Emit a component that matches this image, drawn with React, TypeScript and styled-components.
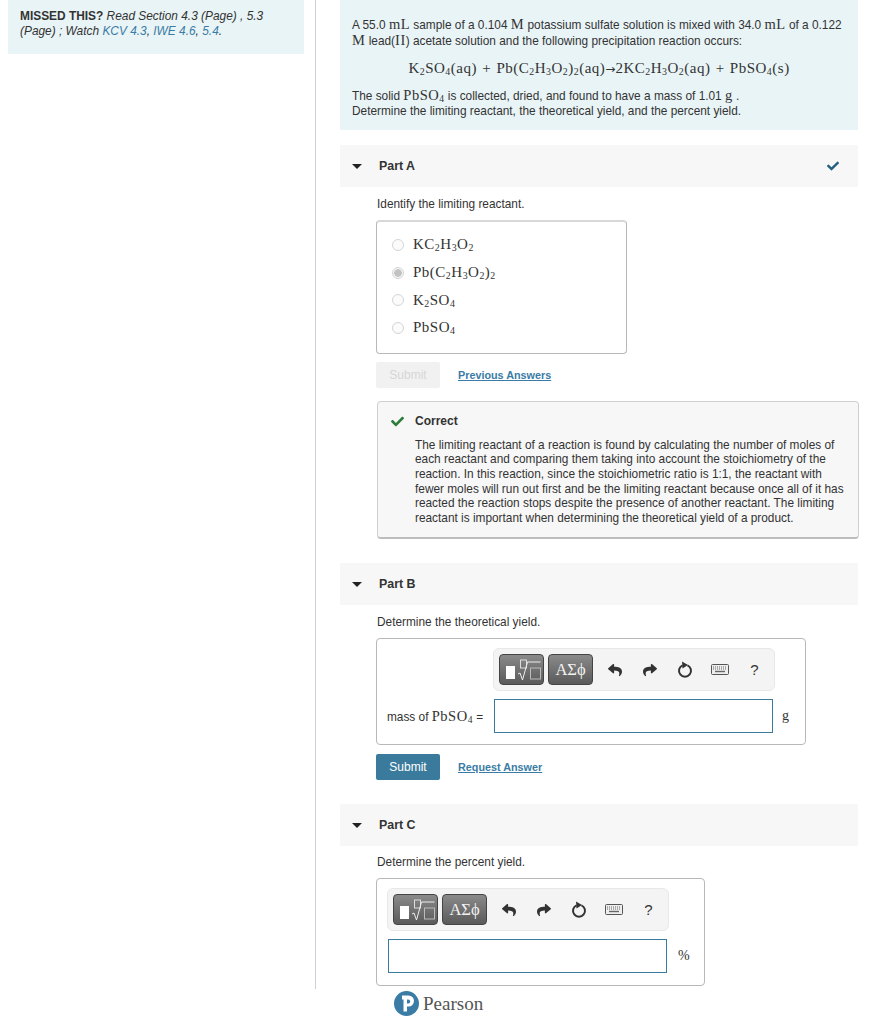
import React from 'react';
import styled, { createGlobalStyle } from 'styled-components';
import { FaCheck, FaReply, FaShare } from 'react-icons/fa';

const GlobalStyle = createGlobalStyle`
  html, body {
    margin: 0;
    padding: 0;
    background: #fff;
  }
  body {
    font-family: 'Liberation Sans', Arial, sans-serif;
    font-size: 12px;
    color: #333;
  }
`;

const Page = styled.div`
  display: flex;
  align-items: flex-start;
  width: 890px;
  height: 1024px;
  overflow: hidden;
  padding-left: 8px;
  box-sizing: border-box;
`;

const Sidebar = styled.aside`
  width: 308px;
  height: 989px;
  flex-shrink: 0;
  box-sizing: border-box;
  border-right: 1px solid #c9d2d9;
`;

const HintPanel = styled.div`
  width: 296px;
  height: 54px;
  box-sizing: border-box;
  padding: 9px 12px 0;
  background: #e9f4f7;
  font-size: 11.9px;
  line-height: 14.5px;
  color: #333;
`;

const HintLink = styled.span`
  color: #3a7ca5;
`;

const Main = styled.main`
  width: 518px;
  margin-left: 24px;
  flex-shrink: 0;
`;

const Intro = styled.section`
  height: 130px;
  box-sizing: border-box;
  padding: 17px 12px 0;
  background: #e9f4f7;
  font-size: 11.85px;
  line-height: 15px;
  color: #333;
`;

const Equation = styled.div`
  display: flex;
  justify-content: center;
  align-items: baseline;
  margin: 10px 0 11px;
  height: 18px;
  line-height: 18px;
  word-spacing: 1px;
`;

const Arrow = styled.span`
  font-family: 'DejaVu Sans', sans-serif;
  font-size: 12px;
  color: #333;
`;

const Math = styled.span`
  font-family: 'Liberation Serif', serif;
  font-size: ${({ $size }: { $size?: number }) => $size || 14.5}px;
  letter-spacing: 0.5px;
  sub {
    font-size: 0.66em;
    line-height: 0;
    vertical-align: -0.25em;
  }
`;

const PartHeader = styled.header`
  display: flex;
  align-items: center;
  height: 42px;
  margin-top: ${({ $top }: { $top: number }) => $top}px;
  padding: 0 19px 0 12px;
  background: #f7f7f7;
`;

const Caret = styled.span`
  width: 0;
  height: 0;
  border-left: 5px solid transparent;
  border-right: 5px solid transparent;
  border-top: 5px solid #222;
  margin-right: 17px;
`;

const PartTitle = styled.h3`
  margin: 0;
  flex: 1;
  font-size: 12.4px;
  font-weight: 700;
  color: #333;
`;

const DoneMark = styled.span`
  display: flex;
  color: #23617f;
  font-size: 12px;
`;

const PartBody = styled.div`
  padding-left: 36px;
`;

const Prompt = styled.p`
  margin: 10px 0 8px 1px;
  height: 15px;
  font-size: 11.85px;
  line-height: 15px;
  color: #333;
`;

const TightPrompt = styled(Prompt)`
  margin-top: 9px;
`;

const ChoiceBox = styled.div`
  display: flex;
  flex-direction: column;
  width: 251px;
  height: 134px;
  box-sizing: border-box;
  padding: 9px 15px 0;
  border: 1px solid #b8b8b8;
  border-top: 2px solid #d8d8d8;
  border-radius: 4px;
`;

const Choice = styled.div`
  display: flex;
  align-items: center;
  gap: 9px;
  height: 27.7px;
`;

const Radio = styled.span<{ $checked?: boolean }>`
  display: block;
  width: 12px;
  height: 12px;
  box-sizing: border-box;
  border-radius: 50%;
  border: 1px solid #d5d5d5;
  background: ${({ $checked }) =>
    $checked ? 'radial-gradient(circle, #c2c2c2 0 3.5px, #f4f4f4 4px)' : '#fbfbfb'};
`;

const ActionRow = styled.div`
  display: flex;
  align-items: center;
  gap: 18px;
  margin-top: ${({ $top }: { $top: number }) => $top}px;
`;

const SubmitButton = styled.button<{ $disabled?: boolean }>`
  width: 64px;
  height: 26px;
  padding: 0;
  border: none;
  border-radius: 2px;
  font-family: 'Liberation Sans', Arial, sans-serif;
  font-size: 12px;
  color: ${({ $disabled }) => ($disabled ? '#d6d6d6' : '#fff')};
  background: ${({ $disabled }) => ($disabled ? '#f1f1f1' : '#3a7a9c')};
`;

const TextLink = styled.a`
  font-size: 10.8px;
  font-weight: 700;
  color: #3a7ca5;
  text-decoration: underline;
`;

const Feedback = styled.div`
  display: flex;
  width: 482px;
  height: 138px;
  box-sizing: border-box;
  margin: 13px 0 0 1px;
  padding: 12px 12px 0 13px;
  background: #f7f7f7;
  border: 1px solid #d0d0d0;
  border-bottom: 2px solid #bdbdbd;
  border-radius: 4px;
`;

const FeedbackMark = styled.span`
  display: flex;
  width: 24px;
  height: 15px;
  align-items: center;
  flex-shrink: 0;
  color: #2f7d3b;
  font-size: 13px;
`;

const FeedbackTitle = styled.div`
  font-size: 12px;
  font-weight: 700;
  line-height: 15px;
  color: #333;
  margin-bottom: 8.5px;
`;

const FeedbackText = styled.div`
  font-size: 11.85px;
  line-height: 14.7px;
  color: #333;
`;

const AnswerBox = styled.div<{ $width: number; $left: number; $bottom: number }>`
  display: grid;
  grid-template-columns: auto 279px auto;
  align-items: center;
  justify-content: start;
  row-gap: 8px;
  width: ${({ $width }) => $width}px;
  box-sizing: border-box;
  padding: 9px 10px ${({ $bottom }) => $bottom}px ${({ $left }) => $left}px;
  border: 1px solid #b8b8b8;
  border-radius: 4px;
`;

const MathLabel = styled.span`
  width: 107px;
  font-size: 11.85px;
  white-space: nowrap;
`;

const Toolbar = styled.div`
  grid-column: 2 / 4;
  display: flex;
  align-items: center;
  width: 282px;
  height: 43px;
  box-sizing: border-box;
  margin-left: -1px;
  padding: 0 0 0 5px;
  background: #f4f4f4;
  border: 1px solid #e8e8e8;
  border-radius: 6px;
`;

const PaletteButton = styled.span`
  display: flex;
  align-items: center;
  justify-content: center;
  width: 45px;
  height: 31px;
  box-sizing: border-box;
  margin-right: 4px;
  border: 1px solid #444;
  border-radius: 4px;
  background: linear-gradient(#8a8a8a, #5a5a5a);
  font-family: 'Liberation Serif', serif;
  font-size: 16.5px;
  color: #f3f3f3;
`;

const ToolIcon = styled.span`
  display: flex;
  align-items: center;
  justify-content: center;
  width: 35px;
  font-size: 14px;
  color: #333;
`;

const HelpMark = styled(ToolIcon)`
  font-size: 15px;
`;

const AnswerInput = styled.input`
  grid-column: 2;
  width: 279px;
  height: 34px;
  box-sizing: border-box;
  padding: 0;
  background: #fff;
  border: 1px solid #3a7a9c;
  border-radius: 0;
`;

const Unit = styled.span`
  padding-left: 9px;
  font-family: 'Liberation Serif', serif;
  font-size: 14px;
`;

const Percent = styled(Unit)`
  padding-left: 11px;
  font-size: 14px;
`;

const Footer = styled.div`
  display: flex;
  align-items: center;
  gap: 4px;
  margin: 4px 0 0 18px;
  font-family: 'Liberation Serif', serif;
  font-size: 19px;
  color: #555;
`;

function Chem({ parts, size }: { parts: (string | number)[]; size?: number }) {
  return (
    <Math $size={size}>
      {parts.map((part, i) =>
        typeof part === 'number' ? <sub key={i}>{part}</sub> : <React.Fragment key={i}>{part}</React.Fragment>
      )}
    </Math>
  );
}

function TemplateGlyph() {
  return (
    <svg width="43" height="29" viewBox="0 0 43 29" fill="none">
      <rect x="6" y="11" width="9" height="13" fill="#fff" />
      <rect x="20.5" y="5" width="6" height="8" stroke="#ddd" />
      <path d="M18 19l2-1 2.5 7 5-18h13" stroke="#eee" />
      <rect x="30.5" y="13" width="10" height="11" stroke="#bbb" />
    </svg>
  );
}

function ResetGlyph() {
  return (
    <svg width="16" height="18" viewBox="0 0 16 18" fill="none">
      <path d="M10.5 4.3a6 6 0 1 1-5 0" stroke="#333" strokeWidth="2" />
      <path d="M5 .5l6 3.6-5.5 3.4z" fill="#333" />
    </svg>
  );
}

function KeyboardGlyph() {
  return (
    <svg width="18" height="11" viewBox="0 0 18 11" fill="none">
      <rect x=".5" y=".5" width="17" height="10" rx="1" fill="#eee" stroke="#555" />
      <path d="M2 3h14M2 5h14" stroke="#666" strokeDasharray="1 1" />
      <path d="M4 7.5h10" stroke="#666" strokeWidth="1.4" />
    </svg>
  );
}

function PearsonLogo() {
  return (
    <svg width="25" height="27" viewBox="0 0 25 27">
      <circle cx="12.5" cy="13.5" r="12.5" fill="#3a7ca5" />
      <path d="M8 5.5h6.5a5 5 0 0 1 0 11H13v5H9.5V9H13v4.5h1.2a2 2 0 0 0 0-4H8z" fill="#fff" />
    </svg>
  );
}

function MathToolbar() {
  return (
    <Toolbar>
      <PaletteButton>
        <TemplateGlyph />
      </PaletteButton>
      <PaletteButton>ΑΣϕ</PaletteButton>
      <ToolIcon>
        <FaReply />
      </ToolIcon>
      <ToolIcon>
        <FaShare />
      </ToolIcon>
      <ToolIcon>
        <ResetGlyph />
      </ToolIcon>
      <ToolIcon>
        <KeyboardGlyph />
      </ToolIcon>
      <HelpMark>?</HelpMark>
    </Toolbar>
  );
}

export default function App() {
  return (
    <Page>
      <GlobalStyle />
      <Sidebar>
        <HintPanel>
          <b>MISSED THIS?</b>{' '}
          <i>
            Read Section 4.3 (Page) , 5.3 (Page) ; Watch <HintLink>KCV 4.3</HintLink>, <HintLink>IWE 4.6</HintLink>,{' '}
            <HintLink>5.4</HintLink>.
          </i>
        </HintPanel>
      </Sidebar>
      <Main>
        <Intro>
          A 55.0 <Math>mL</Math> sample of a 0.104 <Math>M</Math> potassium sulfate solution is mixed with 34.0{' '}
          <Math>mL</Math> of a 0.122 <Math>M</Math> lead(<Math>II</Math>) acetate solution and the following
          precipitation reaction occurs:
          <Equation>
            <Chem size={15} parts={['K', 2, 'SO', 4, '(aq) + Pb(C', 2, 'H', 3, 'O', 2, ')', 2, '(aq)']} />
            <Arrow>→</Arrow>
            <Chem size={15} parts={['2KC', 2, 'H', 3, 'O', 2, '(aq) + PbSO', 4, '(s)']} />
          </Equation>
          The solid <Chem parts={['PbSO', 4]} /> is collected, dried, and found to have a mass of 1.01 <Math>g</Math> .
          <br />
          Determine the limiting reactant, the theoretical yield, and the percent yield.
        </Intro>

        <PartHeader $top={15}>
          <Caret />
          <PartTitle>Part A</PartTitle>
          <DoneMark>
            <FaCheck />
          </DoneMark>
        </PartHeader>
        <PartBody>
          <Prompt>Identify the limiting reactant.</Prompt>
          <ChoiceBox>
            <Choice>
              <Radio />
              <Chem size={15} parts={['KC', 2, 'H', 3, 'O', 2]} />
            </Choice>
            <Choice>
              <Radio $checked />
              <Chem size={15} parts={['Pb(C', 2, 'H', 3, 'O', 2, ')', 2]} />
            </Choice>
            <Choice>
              <Radio />
              <Chem size={15} parts={['K', 2, 'SO', 4]} />
            </Choice>
            <Choice>
              <Radio />
              <Chem size={15} parts={['PbSO', 4]} />
            </Choice>
          </ChoiceBox>
          <ActionRow $top={8}>
            <SubmitButton $disabled>Submit</SubmitButton>
            <TextLink>Previous Answers</TextLink>
          </ActionRow>
          <Feedback>
            <FeedbackMark>
              <FaCheck />
            </FeedbackMark>
            <div>
              <FeedbackTitle>Correct</FeedbackTitle>
              <FeedbackText>
                The limiting reactant of a reaction is found by calculating the number of moles of each reactant and
                comparing them taking into account the stoichiometry of the reaction. In this reaction, since the
                stoichiometric ratio is 1:1, the reactant with fewer moles will run out first and be the limiting
                reactant because once all of it has reacted the reaction stops despite the presence of another
                reactant. The limiting reactant is important when determining the theoretical yield of a product.
              </FeedbackText>
            </div>
          </Feedback>
        </PartBody>

        <PartHeader $top={24}>
          <Caret />
          <PartTitle>Part B</PartTitle>
        </PartHeader>
        <PartBody>
          <Prompt>Determine the theoretical yield.</Prompt>
          <AnswerBox $width={430} $left={10} $bottom={11}>
            <MathToolbar />
            <MathLabel>
              mass of <Chem parts={['PbSO', 4]} /> =
            </MathLabel>
            <AnswerInput aria-label="mass" />
            <Unit>g</Unit>
          </AnswerBox>
          <ActionRow $top={9}>
            <SubmitButton>Submit</SubmitButton>
            <TextLink>Request Answer</TextLink>
          </ActionRow>
        </PartBody>

        <PartHeader $top={24}>
          <Caret />
          <PartTitle>Part C</PartTitle>
        </PartHeader>
        <PartBody>
          <TightPrompt>Determine the percent yield.</TightPrompt>
          <AnswerBox $width={329} $left={11} $bottom={12}>
            <MathToolbar />
            <AnswerInput aria-label="percent" />
            <Percent>%</Percent>
          </AnswerBox>
          <Footer>
            <PearsonLogo />
            Pearson
          </Footer>
        </PartBody>
      </Main>
    </Page>
  );
}
